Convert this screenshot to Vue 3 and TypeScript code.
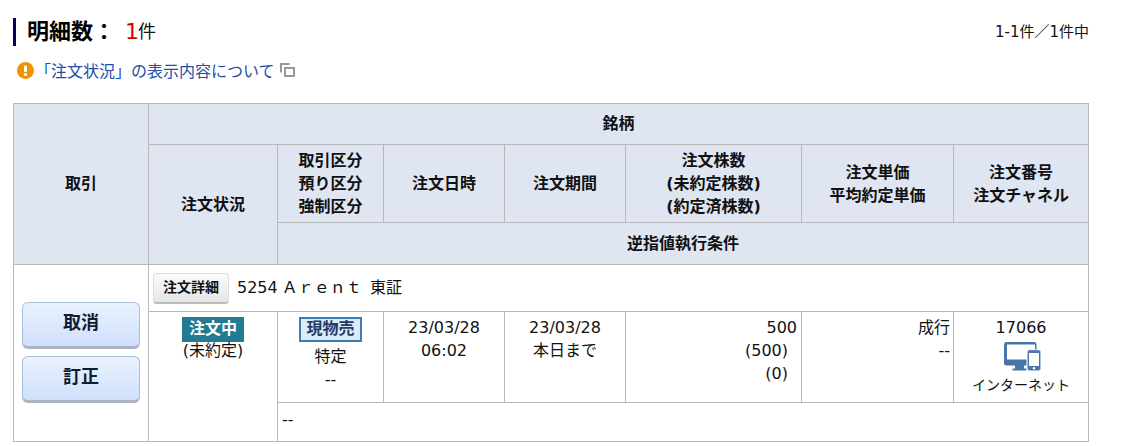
<script setup lang="ts">
const headerLines = ['取引区分', '預り区分', '強制区分']
const quantityLines = ['注文株数', '(未約定株数)', '(約定済株数)']
</script>

<template>
  <div class="page">
    <div class="summary">
      <h2 class="count"><span class="count-label">明細数：</span><span class="count-num">1</span><span class="count-unit">件</span></h2>
      <div class="range">1-1件／1件中</div>
    </div>
    <div class="notice">
      <svg class="warn" width="17" height="17" viewBox="0 0 17 17">
        <circle cx="8.500" cy="8.500" r="8.500" fill="#f39200" />
        <rect x="7" y="3.500" width="3" height="6.500" rx="1" fill="#fff" />
        <circle cx="8.500" cy="12.500" r="1.600" fill="#fff" />
      </svg>
      <a class="notice-link">「注文状況」の表示内容について</a>
      <svg class="copy" width="15" height="14" viewBox="0 0 15 14" fill="none" stroke="#999">
        <path d="M9.500 1H1V9.500" stroke-width="2" />
        <rect x="5" y="5" width="9" height="8" stroke-width="2" />
      </svg>
    </div>
    <table class="orders">
      <colgroup>
        <col class="c1" /><col class="c2" /><col class="c3" /><col class="c4" /><col class="c5" /><col class="c6" /><col class="c7" /><col class="c8" />
      </colgroup>
      <tbody>
        <tr class="r1">
          <th rowspan="3">取引</th>
          <th colspan="7">銘柄</th>
        </tr>
        <tr class="r2">
          <th rowspan="2">注文状況</th>
          <th><div v-for="line in headerLines" :key="line" class="th-line">{{ line }}</div></th>
          <th>注文日時</th>
          <th>注文期間</th>
          <th><div v-for="line in quantityLines" :key="line" class="th-line">{{ line }}</div></th>
          <th><div class="th-line">注文単価</div><div class="th-line">平均約定単価</div></th>
          <th><div class="th-line">注文番号</div><div class="th-line">注文チャネル</div></th>
        </tr>
        <tr class="r3">
          <th colspan="6">逆指値執行条件</th>
        </tr>
        <tr class="r4">
          <td rowspan="3" class="actions">
            <button class="action">取消</button>
            <button class="action">訂正</button>
          </td>
          <td colspan="7" class="stock">
            <button class="detail">注文詳細</button><span class="stock-name">5254 Ａｒｅｎｔ&nbsp;&nbsp;東証</span>
          </td>
        </tr>
        <tr class="r5">
          <td rowspan="2" class="center top status">
            <div class="badge-status">注文中</div>
            <div class="sub">(未約定)</div>
          </td>
          <td class="center top kind">
            <span class="badge-kind">現物売</span>
            <div class="kind-line">特定</div>
            <div class="kind-line">--</div>
          </td>
          <td class="center top plain">23/03/28<br />06:02</td>
          <td class="center top plain">23/03/28<br />本日まで</td>
          <td class="right top qty">
            <div>500</div>
            <div class="qty-sub">(500)</div>
            <div class="qty-sub">(0)</div>
          </td>
          <td class="right top plain">成行<br />--</td>
          <td class="center top channel">
            <div>17066</div>
            <svg class="device" width="37" height="29" viewBox="0 0 37 29">
              <rect x="0" y="0" width="32.500" height="23.500" rx="2.500" fill="#4a74a8" />
              <rect x="3" y="2.500" width="28" height="15" fill="#fff" />
              <rect x="11" y="23" width="9" height="4" fill="#4a74a8" />
              <rect x="8.500" y="26.500" width="14" height="2" fill="#4a74a8" />
              <rect x="22.500" y="7.500" width="14.500" height="21.500" rx="2.500" fill="#fff" />
              <rect x="23.500" y="8" width="13" height="20.500" rx="2" fill="#4a74a8" stroke="#9fd0ee" stroke-width="0.600" />
              <rect x="25" y="11" width="10" height="13" fill="#fff" />
              <circle cx="30" cy="26.300" r="1.200" fill="#fff" />
            </svg>
            <div class="channel-name">インターネット</div>
          </td>
        </tr>
        <tr class="r6">
          <td colspan="6" class="trigger">--</td>
        </tr>
      </tbody>
    </table>
  </div>
</template>

<style scoped>
.page {
  width: 1132px;
  height: 446px;
  overflow: hidden;
  box-sizing: border-box;
  padding: 18px 43px 0 13px;
  font-family: "DejaVu Sans", "Noto Sans CJK JP", sans-serif;
  font-size: 16px;
  color: #111;
  background: #fff;
}
.summary {
  display: flex;
  justify-content: space-between;
  align-items: center;
  height: 28px;
}
.count {
  margin: 0;
  height: 28px;
  border-left: 3px solid #000066;
  padding-left: 11px;
  display: flex;
  align-items: center;
  font-weight: 400;
  line-height: 28px;
}
.count-label {
  font-size: 22px;
  font-weight: 700;
  width: 98px;
  white-space: nowrap;
  color: #000;
}
.count-num {
  font-size: 22px;
  color: #d40000;
}
.count-unit {
  font-size: 18px;
  margin-left: -1px;
}
.range {
  font-size: 15px;
  line-height: 28px;
}
.notice {
  display: flex;
  align-items: center;
  height: 20px;
  margin-top: 14px;
  padding-left: 4px;
}
.warn {
  flex: none;
}
.notice-link {
  margin-left: 1px;
  font-size: 16px;
  color: #1c4fa8;
  white-space: nowrap;
}
.copy {
  margin-left: 5px;
  flex: none;
}
.orders {
  margin-top: 23px;
  table-layout: fixed;
  border-collapse: collapse;
  width: 1076px;
}
.c1 { width: 135px; }
.c2 { width: 129px; }
.c3 { width: 106px; }
.c4 { width: 121px; }
.c5 { width: 121px; }
.c6 { width: 176px; }
.c7 { width: 152px; }
.c8 { width: 135px; }
.orders th,
.orders td {
  border: 1px solid #b8b8b8;
  padding: 0;
  box-sizing: border-box;
}
.orders th {
  background: #dfe6f1;
  font-size: 16px;
  line-height: 22px;
  font-weight: 700;
  color: #111;
  text-align: center;
  vertical-align: middle;
}
.th-line {
  line-height: 23px;
}
.r1 { height: 41px; }
.r2 { height: 78px; }
.r3 { height: 42px; }
.r4 { height: 47px; }
.r5 { height: 91px; }
.r6 { height: 39px; }
.orders td.center { text-align: center; }
.orders td.right { text-align: right; padding-right: 3px; }
.orders td.top { vertical-align: top; }
.orders td.actions {
  vertical-align: middle;
  text-align: center;
  padding-bottom: 2px;
}
.action {
  display: block;
  width: 118px;
  height: 47px;
  margin: 0 auto 7px;
  border: 1px solid #a9bfdc;
  border-bottom: 3px solid #aab4c2;
  border-radius: 6px;
  background: linear-gradient(#eaf2fe, #cfe0fb);
  font-family: inherit;
  font-size: 18px;
  line-height: 24px;
  font-weight: 700;
  color: #111a33;
  padding: 0 0 2px;
}
.action:last-child {
  margin-bottom: 0;
}
.stock {
  padding-left: 4px !important;
  vertical-align: middle;
}
.detail {
  width: 76px;
  height: 31px;
  vertical-align: middle;
  border: 1px solid #ddd;
  border-bottom: 2px solid #bbb;
  border-radius: 4px;
  background: linear-gradient(#fbfbfb, #e6e6e6);
  font-family: inherit;
  font-size: 14px;
  line-height: 20px;
  font-weight: 700;
  color: #111;
  padding: 0 0 1px;
}
.stock-name {
  margin-left: 8px;
  font-size: 16px;
  line-height: 22px;
  word-spacing: -1px;
  vertical-align: middle;
  white-space: nowrap;
}
.status {
  padding-top: 5px !important;
}
.badge-status {
  width: 62px;
  height: 25px;
  margin: 0 auto;
  background: #237a93;
  color: #fff;
  font-size: 16px;
  font-weight: 700;
  line-height: 23px;
}
.sub {
  font-size: 16px;
  line-height: 17px;
}
.kind {
  padding-top: 5px !important;
}
.badge-kind {
  display: block;
  width: 63px;
  height: 25px;
  box-sizing: border-box;
  margin: 0 auto;
  background: #dcebf7;
  border: 2px solid #3b7cb5;
  color: #1f3a66;
  font-size: 16px;
  font-weight: 700;
  line-height: 19px;
}
.kind-line {
  line-height: 23px;
  font-size: 16px;
}
.kind-line:first-of-type {
  margin-top: 3px;
}
.plain {
  font-size: 16px;
  line-height: 23px;
  padding-top: 4px !important;
}
.qty {
  font-size: 16px;
  padding-top: 4px !important;
  line-height: 23px;
}
.orders td.qty { padding-right: 4px; }
.qty-sub {
  padding-right: 9px;
}
.channel {
  font-size: 16px;
  line-height: 23px;
  padding-top: 4px !important;
}
.device {
  display: block;
  margin: 3px auto 0;
  transform: translateX(1px);
}
.channel-name {
  font-size: 14px;
  line-height: 20px;
  margin-top: 4px;
}
.trigger {
  padding-bottom: 5px !important;
  padding-left: 4px !important;
  vertical-align: middle;
  font-size: 16px;
  line-height: 22px;
}
</style>

<style>
html, body { margin: 0; background: #fff; }
</style>
